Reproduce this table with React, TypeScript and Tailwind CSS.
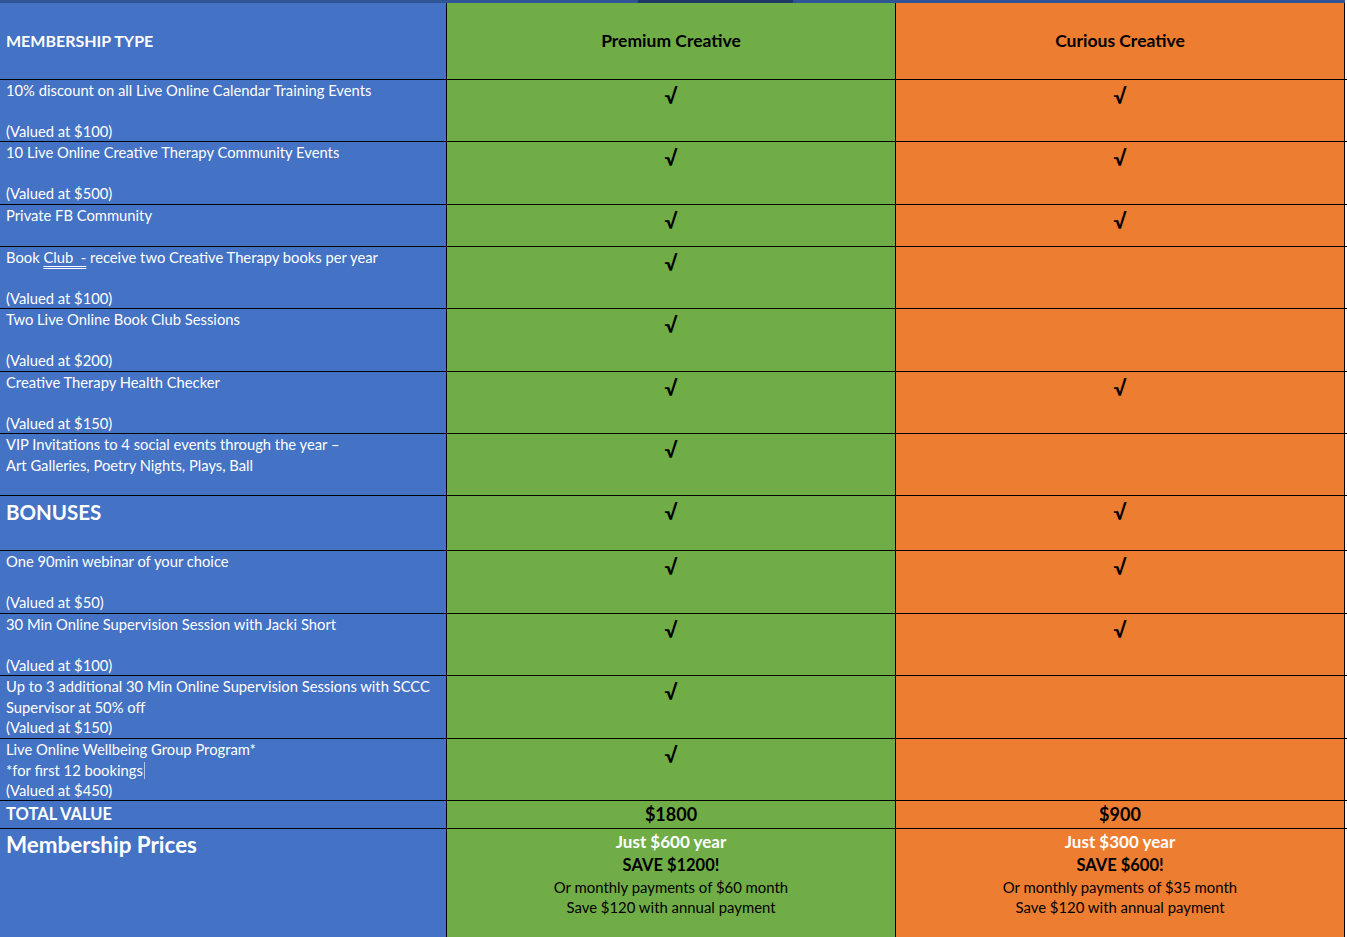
import React from "react";

type Row = {
  h: string;
  lines: React.ReactNode[];
  premium: boolean;
  curious: boolean;
};

const rows: Row[] = [
  {
    h: "h-[62px]",
    lines: ["10% discount on all Live Online Calendar Training Events", "", "(Valued at $100)"],
    premium: true,
    curious: true,
  },
  {
    h: "h-[63px]",
    lines: ["10 Live Online Creative Therapy Community Events", "", "(Valued at $500)"],
    premium: true,
    curious: true,
  },
  { h: "h-[42px]", lines: ["Private FB Community"], premium: true, curious: true },
  {
    h: "h-[62px]",
    lines: [
      <>
        Book <span className="underline decoration-double decoration-1 underline-offset-[3px]">Club&nbsp; -</span>{" "}
        receive two Creative Therapy books per year
      </>,
      "",
      "(Valued at $100)",
    ],
    premium: true,
    curious: false,
  },
  {
    h: "h-[63px]",
    lines: ["Two Live Online Book Club Sessions", "", "(Valued at $200)"],
    premium: true,
    curious: false,
  },
  {
    h: "h-[62px]",
    lines: ["Creative Therapy Health Checker", "", "(Valued at $150)"],
    premium: true,
    curious: true,
  },
  {
    h: "h-[62px]",
    lines: ["VIP Invitations to 4 social events through the year –", "Art Galleries, Poetry Nights, Plays, Ball"],
    premium: true,
    curious: false,
  },
];

const bonusRows: Row[] = [
  {
    h: "h-[63px]",
    lines: ["One 90min webinar of your choice", "", "(Valued at $50)"],
    premium: true,
    curious: true,
  },
  {
    h: "h-[62px]",
    lines: ["30 Min Online Supervision Session with Jacki Short", "", "(Valued at $100)"],
    premium: true,
    curious: true,
  },
  {
    h: "h-[63px]",
    lines: [
      "Up to 3 additional 30 Min Online Supervision Sessions with SCCC",
      "Supervisor at 50% off",
      "(Valued at $150)",
    ],
    premium: true,
    curious: false,
  },
  {
    h: "h-[62px]",
    lines: [
      "Live Online Wellbeing Group Program*",
      <>
        *for first 12 bookings
        <span className="ml-px inline-block h-[17px] w-px bg-white/60 align-[-3px]" />
      </>,
      "(Valued at $450)",
    ],
    premium: true,
    curious: false,
  },
];

const prices = [
  { total: "$1800", year: "Just $600 year", save: "SAVE $1200!", monthly: "Or monthly payments of $60 month" },
  { total: "$900", year: "Just $300 year", save: "SAVE $600!", monthly: "Or monthly payments of $35 month" },
];

const blue = "w-[447px] shrink-0 border-r border-black bg-[#4472c4] px-[6px] text-white";
const green = "w-[449px] shrink-0 border-r border-black bg-[#70ad47] text-center text-black";
const orange = "w-[449px] shrink-0 border-r border-black bg-[#ed7d31] text-center text-black";

function Check({ on }: { on: boolean }) {
  if (!on) return null;
  return <div className="pt-[5px] text-[21px] font-bold leading-[22px]">√</div>;
}

function FeatureRow({ row }: { row: Row }) {
  return (
    <div className={`flex border-b border-black ${row.h}`}>
      <div className={`${blue} text-[14.75px] leading-[20.5px]`}>
        {row.lines.map((l, i) => (
          <div key={i} className="h-[20.5px] whitespace-nowrap">
            {l}
          </div>
        ))}
      </div>
      <div className={green}>
        <Check on={row.premium} />
      </div>
      <div className={orange}>
        <Check on={row.curious} />
      </div>
    </div>
  );
}

export default function App() {
  return (
    <div className="min-h-[937px] bg-white font-['Lato',sans-serif]">
      <div className="flex h-[3px] w-[1345px]">
        <div className="w-[638px] bg-[#2f5597]" />
        <div className="w-[155px] bg-[#203864]" />
        <div className="flex-1 bg-[#2f5597]" />
      </div>

      <div className="flex h-[77px] border-b border-black">
        <div className={`${blue} flex items-center text-[16px] font-bold`}>MEMBERSHIP TYPE</div>
        <div className={`${green} flex items-center justify-center text-[17.5px] font-bold`}>Premium Creative</div>
        <div className={`${orange} flex items-center justify-center text-[17.5px] font-bold`}>Curious Creative</div>
      </div>

      {rows.map((r, i) => (
        <FeatureRow key={i} row={r} />
      ))}

      <div className="flex h-[55px] border-b border-black">
        <div className={`${blue} pt-[4px] text-[20.5px] font-bold leading-[24px]`}>BONUSES</div>
        <div className={green}>
          <Check on />
        </div>
        <div className={orange}>
          <Check on />
        </div>
      </div>

      {bonusRows.map((r, i) => (
        <FeatureRow key={i} row={r} />
      ))}

      <div className="flex h-[28px] border-b border-black">
        <div className={`${blue} flex items-center text-[16.5px] font-bold`}>TOTAL VALUE</div>
        <div className={`${green} flex items-center justify-center text-[18px] font-bold`}>{prices[0].total}</div>
        <div className={`${orange} flex items-center justify-center text-[18px] font-bold`}>{prices[1].total}</div>
      </div>

      <div className="flex h-[109px]">
        <div className={`${blue} pt-[3px] text-[22.4px] font-bold leading-[26px]`}>Membership Prices</div>
        {prices.map((p, i) => (
          <div key={p.year} className={i === 0 ? green : orange}>
            <div className="pt-[1px] text-[17px] font-bold leading-[23px] text-white">{p.year}</div>
            <div className="text-[16.5px] font-bold leading-[24px]">{p.save}</div>
            <div className="text-[14.9px] leading-[20px]">{p.monthly}</div>
            <div className="text-[14.9px] leading-[20px]">Save $120 with annual payment</div>
          </div>
        ))}
      </div>
    </div>
  );
}
